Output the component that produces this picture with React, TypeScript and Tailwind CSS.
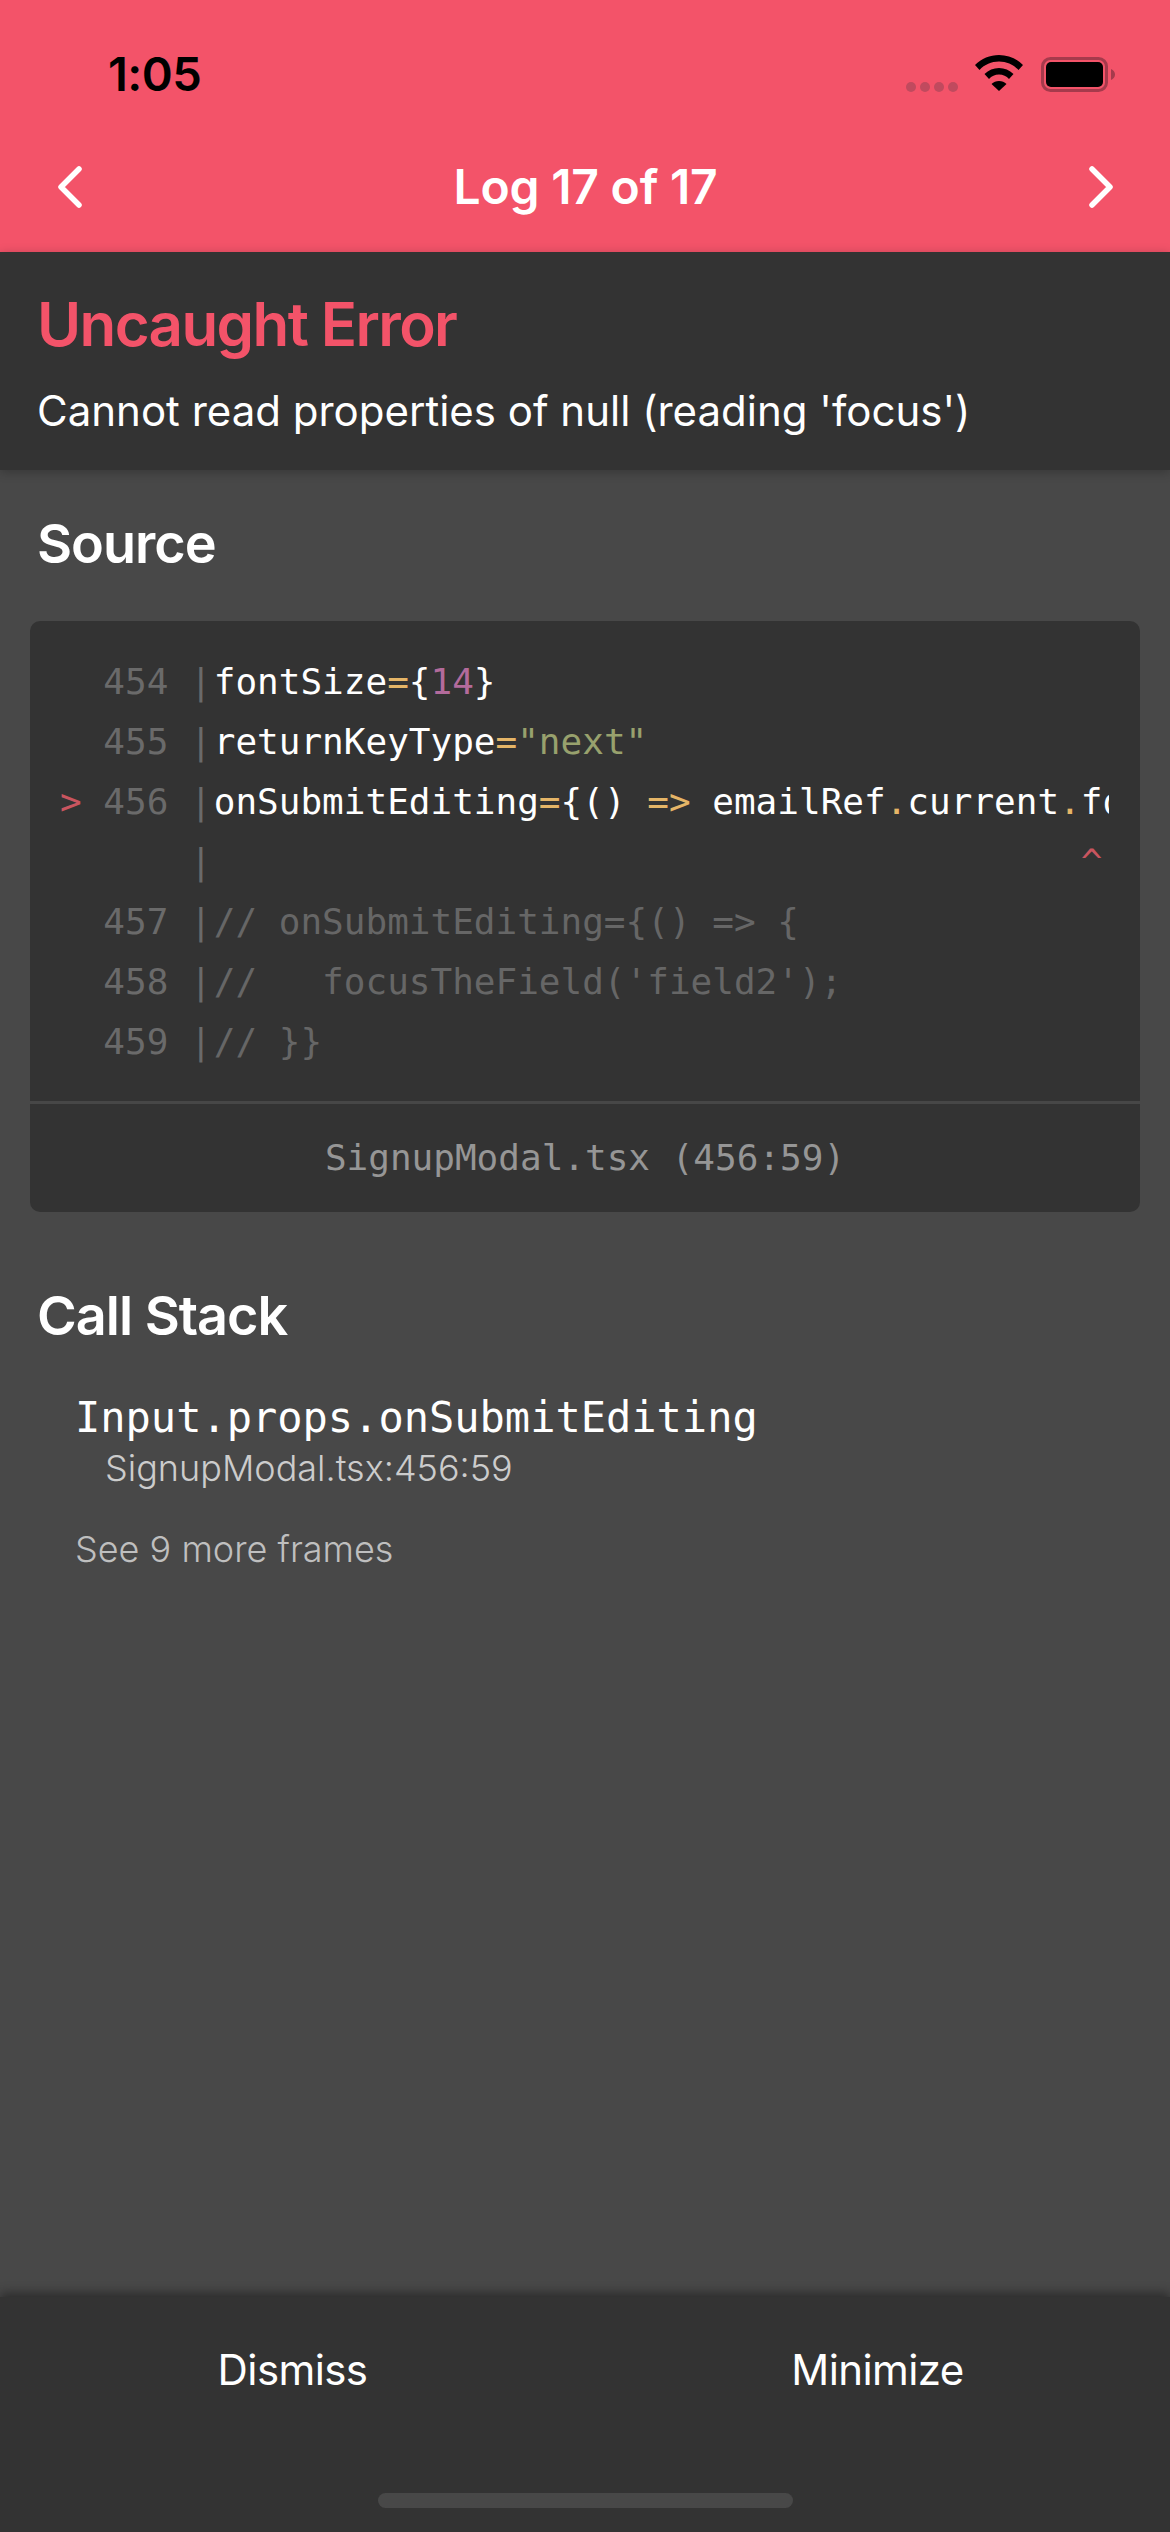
const punct = "text-[#e5b567]";

function Chevron({ dir }: { dir: "left" | "right" }) {
  return (
    <svg width="24" height="42" viewBox="0 0 24 42" fill="none" stroke="#ffffff" strokeWidth="5.5" strokeLinecap="round" strokeLinejoin="round">
      <path d={dir === "left" ? "M21 3 L3 21 L21 39" : "M3 3 L21 21 L3 39"} />
    </svg>
  );
}

function StatusBar() {
  return (
    <div className="flex h-[149px] items-start justify-between pl-[108px] pr-[55px] pt-[42px]">
      <span className="text-[47px] leading-[64px] font-semibold tracking-[-0.5px] text-black">1:05</span>
      <div className="flex items-start pt-[13px]">
        <div className="mt-[27px] mr-[17px] flex gap-[4px]">
          <div className="h-[10px] w-[10px] rounded-full bg-[#c04a5e]" />
          <div className="h-[10px] w-[10px] rounded-full bg-[#c04a5e]" />
          <div className="h-[10px] w-[10px] rounded-full bg-[#c04a5e]" />
          <div className="h-[10px] w-[10px] rounded-full bg-[#c04a5e]" />
        </div>
        <svg width="48" height="36" viewBox="0 0 48 36" fill="#000000">
          <path d="M24 0C33 0 41.5 3.5 48 10L43.5 15C38.5 9.5 31.5 6.5 24 6.5C16.5 6.5 9.5 9.5 4.5 15L0 10C6.5 3.5 15 0 24 0Z" />
          <path d="M24 13C29.5 13 34.5 15 38.5 19L34 24C31.5 21 28 19.5 24 19.5C20 19.5 16.5 21 14 24L9.5 19C13.5 15 18.5 13 24 13Z" />
          <path d="M24 26C27 26 29.5 27 31.5 29L24 36L16.5 29C18.5 27 21 26 24 26Z" />
        </svg>
        <svg className="mt-[2px] ml-[18px]" width="74" height="35" viewBox="0 0 74 35">
          <rect x="1.5" y="1.5" width="64" height="32" rx="8" fill="none" stroke="#a63a4c" strokeWidth="3" />
          <rect x="5" y="5" width="57" height="25" rx="5" fill="#000000" />
          <path d="M70 12C72.5 13 74 15 74 17.500C74 20 72.500 22 70 23Z" fill="#a63a4c" />
        </svg>
      </div>
    </div>
  );
}

function CodeLine({ marker, num, dim, children }: { marker?: boolean; num?: string; dim?: boolean; children?: React.ReactNode }) {
  return (
    <div className="h-[60px] overflow-hidden whitespace-pre text-[36px] leading-[60px]">
      <span className="text-[#c9555f]">{marker ? ">" : " "}</span>
      <span className="text-[#6a6a6a]">{" " + (num ?? "   ") + " |"}</span>
      <span className={dim ? "ml-[2px] text-[#666666]" : "ml-[2px] text-white"}>{children}</span>
    </div>
  );
}

export default function App() {
  return (
    <div className="flex min-h-screen flex-col bg-[#484848] font-['Inter',sans-serif]">
      <header className="h-[252px] bg-[#f35369]">
        <StatusBar />
        <div className="flex h-[76px] items-center justify-between pl-[58px] pr-[57px]">
          <Chevron dir="left" />
          <span className="text-[48px] font-semibold tracking-[-0.2px] text-white">Log 17 of 17</span>
          <Chevron dir="right" />
        </div>
      </header>

      <div className="flex h-[218px] flex-col bg-[#333333] px-[37px] pt-[36px] shadow-[0_2px_10px_rgba(0,0,0,0.25)]">
        <h1 className="text-[60px] leading-[72px] font-semibold tracking-[-1.6px] text-[#f35369]">Uncaught Error</h1>
        <p className="mt-[22px] text-[42px] leading-[58px] text-white">Cannot read properties of null (reading 'focus')</p>
      </div>

      <main className="flex-1">
        <h2 className="px-[37px] pt-[44px] text-[54px] leading-[60px] font-semibold tracking-[-1px] text-white">Source</h2>

        <div className="mx-[30px] mt-[47px] rounded-[10px] bg-[#333333] font-['DejaVu_Sans_Mono',monospace]">
          <div className="pt-[31px] pb-[29px] pl-[30px] pr-[31px]">
            <CodeLine num="454">
              fontSize<span className={punct}>=</span>{"{"}<span className="text-[#b36b9c]">14</span>{"}"}
            </CodeLine>
            <CodeLine num="455">
              returnKeyType<span className={punct}>=</span><span className="text-[#98a16d]">"next"</span>
            </CodeLine>
            <CodeLine marker num="456">
              onSubmitEditing<span className={punct}>=</span>{"{() "}<span className={punct}>{"=>"}</span>{" emailRef"}<span className={punct}>.</span>current<span className={punct}>.</span>focus()
            </CodeLine>
            <CodeLine>
              <span className="text-[#c9555f]">{"                                        ^"}</span>
            </CodeLine>
            <CodeLine dim num="457">{"// onSubmitEditing={() => {"}</CodeLine>
            <CodeLine dim num="458">{"//   focusTheField('field2');"}</CodeLine>
            <CodeLine dim num="459">{"// }}"}</CodeLine>
          </div>
          <div className="flex h-[111px] items-center justify-center border-t-[3px] border-[#474747] text-[36px] text-[#969696]">
            SignupModal.tsx (456:59)
          </div>
        </div>

        <h2 className="px-[37px] pt-[74px] text-[54px] leading-[60px] font-semibold tracking-[-1px] text-white">Call Stack</h2>

        <div className="px-[75px] pt-[46px]">
          <p className="font-['DejaVu_Sans_Mono',monospace] text-[42px] leading-[52px] text-white">Input.props.onSubmitEditing</p>
          <p className="pl-[30px] pt-[2px] text-[36px] leading-[44px] font-light text-[#cccccc]">SignupModal.tsx:456:59</p>
          <p className="pt-[37px] text-[36px] leading-[44px] font-light text-[#bfbfbf]">See 9 more frames</p>
        </div>
      </main>

      <footer className="h-[235px] bg-[#333333] shadow-[0_-4px_10px_rgba(0,0,0,0.4)]">
        <div className="flex h-[145px] items-center text-[42px] tracking-[-0.6px] text-white">
          <div className="flex-1 text-center">Dismiss</div>
          <div className="flex-1 text-center">Minimize</div>
        </div>
        <div className="mx-auto mt-[51px] h-[15px] w-[415px] rounded-[8px] bg-[#484848]" />
      </footer>
    </div>
  );
}
